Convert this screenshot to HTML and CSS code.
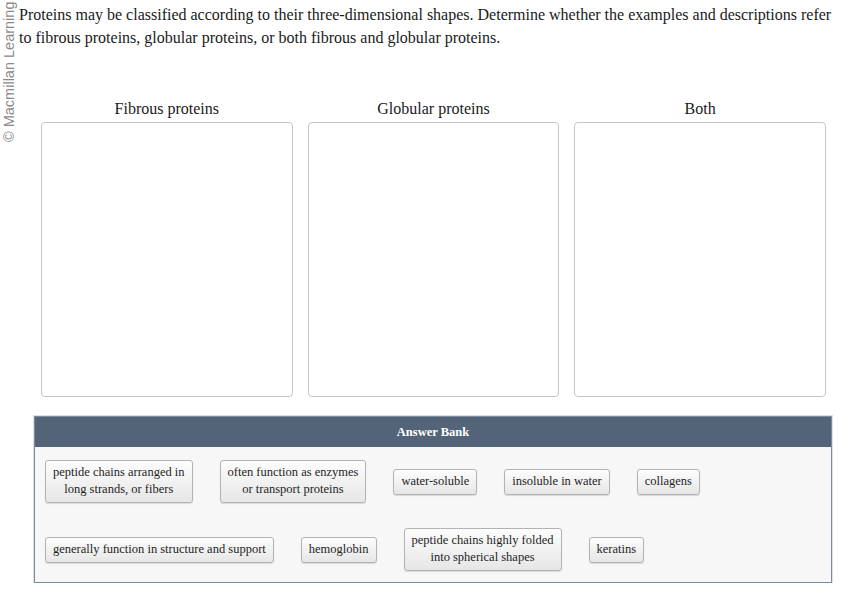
FILE: index.html
```html
<!DOCTYPE html>
<html lang="en">
<head>
<meta charset="utf-8">
<title>Protein classification</title>
<link rel="stylesheet" href="styles.css">
</head>
<body>
<div class="page">
  <div class="watermark">© Macmillan Learning</div>
  <main class="main">
    <p class="question">Proteins may be classified according to their three-dimensional shapes. Determine whether the examples and descriptions refer to fibrous proteins, globular proteins, or both fibrous and globular proteins.</p>
    <div class="columns">
      <div class="column">
        <div class="col-title">Fibrous proteins</div>
        <div class="dropbox"></div>
      </div>
      <div class="column">
        <div class="col-title">Globular proteins</div>
        <div class="dropbox"></div>
      </div>
      <div class="column">
        <div class="col-title">Both</div>
        <div class="dropbox"></div>
      </div>
    </div>
    <section class="bank">
      <div class="bank-header">Answer Bank</div>
      <div class="bank-body">
        <div class="tile">peptide chains arranged in<br>long strands, or fibers</div>
        <div class="tile">often function as enzymes<br>or transport proteins</div>
        <div class="tile">water-soluble</div>
        <div class="tile">insoluble in water</div>
        <div class="tile">collagens</div>
        <div class="tile">generally function in structure and support</div>
        <div class="tile">hemoglobin</div>
        <div class="tile">peptide chains highly folded<br>into spherical shapes</div>
        <div class="tile">keratins</div>
      </div>
    </section>
  </main>
</div>
</body>
</html>
```

FILE: styles.css
```css
html, body {
  margin: 0;
  padding: 0;
  background: #ffffff;
}

body {
  font-family: "Liberation Serif", "Times New Roman", serif;
  color: #1a1a1a;
}

.page {
  position: relative;
  display: flex;
  align-items: flex-start;
  padding-left: 18px;
}

.watermark {
  position: absolute;
  left: 0;
  top: 142px;
  transform-origin: 0 0;
  transform: rotate(-90deg);
  font-family: "Liberation Sans", Arial, sans-serif;
  font-size: 14.5px;
  line-height: 18px;
  color: #8a8a8a;
  white-space: nowrap;
}

.main {
  flex: 1 1 auto;
}

.question {
  margin: 3px 0 0 1px;
  font-size: 16px;
  line-height: 23px;
  width: 820px;
}

.columns {
  display: grid;
  grid-template-columns: repeat(3, 1fr);
  column-gap: 15px;
  width: 785px;
  margin: 50px 0 0 23px;
}

.column {
  display: flex;
  flex-direction: column;
}

.col-title {
  font-size: 16px;
  line-height: 20px;
  text-align: center;
  margin-bottom: 3px;
}

.dropbox {
  height: 273px;
  border: 1px solid #c6c6c6;
  border-radius: 4px;
  background: #ffffff;
}

.bank {
  width: 796px;
  margin: 19px 0 0 16px;
  border: 1px solid #7f8ca0;
  box-shadow: 0 0 0 1px #dde1e7;
}

.bank-header {
  background: #536479;
  color: #ffffff;
  font-weight: bold;
  font-size: 12.5px;
  line-height: 30px;
  text-align: center;
}

.bank-body {
  background: #f7f7f7;
  display: flex;
  flex-wrap: wrap;
  align-items: center;
  column-gap: 27px;
  row-gap: 25px;
  padding: 13px 10px 11px;
}

.tile {
  font-size: 12.5px;
  line-height: 17px;
  padding: 3px 7px 4px;
  text-align: center;
  color: #1e1e1e;
  border: 1px solid #b3b3b3;
  border-radius: 3px;
  background: linear-gradient(#fdfdfd, #e6e6e6);
  box-shadow: 0 1px 1px rgba(0, 0, 0, 0.12);
  white-space: nowrap;
}
```
